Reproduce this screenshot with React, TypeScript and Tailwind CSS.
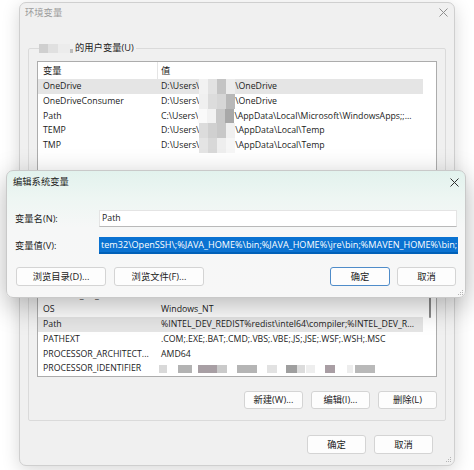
import clsx from "clsx";

const userRows = [
  { name: "OneDrive", pre: "D:\\Users\\", post: "\\OneDrive", sel: true, blur: ["#f2f2f2", "#e2e2e2", "#c4c4c4", "#ececec"] },
  { name: "OneDriveConsumer", pre: "D:\\Users\\", post: "\\OneDrive", blur: ["#f0f0f0", "#dcdcdc", "#d6d6d6", "#b8b8b8"] },
  { name: "Path", pre: "C:\\Users\\", post: "\\AppData\\Local\\Microsoft\\WindowsApps;;...", blur: ["#fafafa", "#f2f2f2", "#c8c8c8", "#a8a8a8"] },
  { name: "TEMP", pre: "D:\\Users\\", post: "\\AppData\\Local\\Temp", blur: ["#dcdcdc", "#d0d0d0", "#c8c8c8", "#f0f0f0"] },
  { name: "TMP", pre: "D:\\Users\\", post: "\\AppData\\Local\\Temp", blur: ["#e4e4e4", "#d8d8d8", "#eeeeee", "#f6f6f6"] },
];

const sysRows = [
  { name: "ComSpec", value: "C:\\Windows\\system32\\cmd.exe" },
  { name: "DriverData", value: "C:\\Windows\\System32\\Drivers\\DriverData" },
  { name: "NUMBER_OF_PROCESSORS", value: "16" },
  { name: "OS", value: "Windows_NT" },
  { name: "Path", value: "%INTEL_DEV_REDIST%redist\\intel64\\compiler;%INTEL_DEV_R...", sel: true },
  { name: "PATHEXT", value: ".COM;.EXE;.BAT;.CMD;.VBS;.VBE;.JS;.JSE;.WSF;.WSH;.MSC" },
  { name: "PROCESSOR_ARCHITECT...", value: "AMD64" },
];

// pixelated blocks over the processor id, [from, to, colour] in page x
const idBlocks: [number, number, string][] = [
  [159, 167, "#d9d9d9"],
  [178, 192, "#b3b3b3"],
  [198, 217, "#a89fa4"],
  [217, 227, "#cacaca"],
  [237, 257, "#b5b5b5"],
  [267, 277, "#e2e2e2"],
  [286, 297, "#9f9f9f"],
  [297, 305, "#dcdcdc"],
  [306, 315, "#eeeeee"],
  [325, 335, "#a99ea4"],
  [347, 353, "#ededed"],
  [355, 375, "#b9b9b9"],
];

function CloseIcon({ color }: { color: string }) {
  return (
    <svg width="9" height="9" viewBox="0 0 9 9" fill="none" stroke={color} strokeWidth="1">
      <path d="M0.5 0.5L8.5 8.5M8.5 0.5L0.5 8.5" />
    </svg>
  );
}

function Grip() {
  return (
    <svg width="6" height="6" viewBox="0 0 6 6" fill="#b5b5b5">
      <rect x="4" y="0" width="1" height="1" />
      <rect x="2" y="2" width="1" height="1" />
      <rect x="4" y="2" width="1" height="1" />
      <rect x="0" y="4" width="1" height="1" />
      <rect x="2" y="4" width="1" height="1" />
      <rect x="4" y="4" width="1" height="1" />
    </svg>
  );
}

function Button({ label, w, h = "h-[18px]", primary }: { label: string; w: string; h?: string; primary?: boolean }) {
  return (
    <div
      className={clsx(
        "flex shrink-0 items-center justify-center rounded-[3px] border bg-[#fdfdfd] text-[#1b1b1b]",
        w,
        h,
        primary ? "border-[#4f8cc9]" : "border-[#d4d4d4]"
      )}
    >
      {label}
    </div>
  );
}

function Header() {
  return (
    <div className="flex h-[17px] items-center bg-white">
      <div className="w-[119px] shrink-0 pl-[5px]">变量</div>
      <div className="h-full w-px bg-[#e5e5e5]" />
      <div className="pl-[3px]">值</div>
    </div>
  );
}

function Row({ name, sel, children }: { name: string; sel?: boolean; children: React.ReactNode }) {
  return (
    <div className={clsx("flex h-[14.75px] items-center text-[8.75px]", sel && "bg-[#e5e5e5]")}>
      <div className="flex h-full w-[120px] shrink-0 items-center overflow-hidden whitespace-nowrap pl-[5px]">{name}</div>
      <div className="flex h-full min-w-0 flex-1 items-center overflow-hidden whitespace-nowrap pl-[3px]">{children}</div>
    </div>
  );
}

export default function App() {
  return (
    <div className="relative h-[470px] w-[474px] overflow-hidden bg-white font-['Open_Sans','Noto_Sans_CJK_SC',sans-serif] text-[9.3px] leading-none text-[#1b1b1b]">
      {/* 环境变量 window (inactive) */}
      <div className="absolute left-[19px] top-[2px] flex h-[464px] w-[436px] flex-col rounded-[7px] border border-[#cfcfcf] bg-[#f0f0f0] shadow-[0_4px_18px_rgba(0,0,0,0.16)]">
        <div className="flex h-[19px] items-center justify-between pl-[5px] pr-[6px] text-[#9b9b9b]">
          <span>环境变量</span>
          <CloseIcon color="#8f8f8f" />
        </div>

        <fieldset className="mx-[8px] mt-[19px] min-w-0 rounded-[2px] border border-[#dadada] px-[8px] pb-[10px]">
          <legend className="ml-[2px] flex h-[14px] items-center pr-[2px]">
            <span className="mr-[2px] flex h-[9px] items-end">
              <span className="h-[9px] w-[9px] bg-[#cfcfcf]" />
              <span className="h-[9px] w-[10px] bg-[#e0e0e0]" />
              <span className="h-[9px] w-[12px] bg-[#ececec]" />
              <span className="h-[4px] w-[3px] bg-[#bdbdbd]" />
            </span>
            的用户变量(U)
          </legend>
          <div className="mt-[6px] flex h-[115px] overflow-hidden border border-[#acacac] bg-white">
            <div className="min-w-0 flex-1">
              <Header />
              {userRows.map((r) => (
                <Row key={r.name} name={r.name} sel={r.sel}>
                  <span>{r.pre}</span>
                  <span className="flex h-full shrink-0">
                    {r.blur.map((c, i) => (
                      <span key={i} className="h-full w-[9px]" style={{ background: c }} />
                    ))}
                  </span>
                  <span>{r.post}</span>
                </Row>
              ))}
            </div>
            <div className="w-[13px] shrink-0" />
          </div>
          <div className="mt-[10px] flex justify-end gap-[8px]">
            <Button label="新建(N)..." w="w-[59px]" />
            <Button label="编辑(E)..." w="w-[59px]" />
            <Button label="删除(D)" w="w-[59px]" />
          </div>
        </fieldset>

        <fieldset className="mx-[8px] mt-[5px] min-w-0 rounded-[2px] border border-[#dadada] px-[8px] pb-[11px]">
          <legend className="ml-[2px] flex h-[14px] items-center px-[2px]">系统变量(S)</legend>
          <div className="mt-[6px] flex h-[137px] overflow-hidden border border-[#acacac] bg-white">
            <div className="min-w-0 flex-1">
              <Header />
              {sysRows.map((r) => (
                <Row key={r.name} name={r.name} sel={r.sel}>
                  {r.value}
                </Row>
              ))}
              <Row name="PROCESSOR_IDENTIFIER">
                <span className="flex h-[8px]">
                  {idBlocks.map(([a, b, c], i) => (
                    <span
                      key={i}
                      className="h-full shrink-0"
                      style={{ marginLeft: a - (i ? idBlocks[i - 1][1] : 161), width: b - a, background: c }}
                    />
                  ))}
                </span>
              </Row>
            </div>
            <div className="flex w-[13px] shrink-0 justify-center">
              <div className="mt-[44px] h-[33px] w-[2px] rounded-full bg-[#8a8a8a]" />
            </div>
          </div>
          <div className="mt-[14px] flex justify-end gap-[8px]">
            <Button label="新建(W)..." w="w-[59px]" />
            <Button label="编辑(I)..." w="w-[59px]" />
            <Button label="删除(L)" w="w-[59px]" />
          </div>
        </fieldset>

        <div className="mt-[14px] flex justify-end gap-[8px] pr-[21px]">
          <Button label="确定" w="w-[59px]" h="h-[19px]" />
          <Button label="取消" w="w-[59px]" h="h-[19px]" />
        </div>
        <div className="mt-auto flex justify-end pb-[2px] pr-[2px]">
          <Grip />
        </div>
      </div>

      {/* 编辑系统变量 dialog (active, on top) */}
      <div className="absolute left-[6px] top-[170px] flex w-[460px] flex-col rounded-[7px] border border-[#c9c9c9] bg-[linear-gradient(180deg,#e2f2ed_0%,#eef6f3_22%,#f6f7f7_45%,#f7f7f7_100%)] shadow-[0_8px_28px_rgba(0,0,0,0.28)]">
        <div className="flex h-[22px] items-center justify-between pl-[6px] pr-[6px]">
          <span>编辑系统变量</span>
          <CloseIcon color="#303030" />
        </div>

        <div className="mt-[17px] flex items-center pl-[8px] pr-[8px]">
          <div className="w-[84px] shrink-0">变量名(N):</div>
          <div className="flex h-[17px] flex-1 items-center border border-[#e4e4e4] border-b-[#b9b9b9] bg-white pl-[2px] text-[8.75px]">
            Path
          </div>
        </div>

        <div className="mt-[10px] flex items-center pl-[8px] pr-[7px]">
          <div className="w-[84px] shrink-0">变量值(V):</div>
          <div className="flex h-[17px] min-w-0 flex-1 border-b-2 border-b-[#0060b8] bg-white">
            <div className="flex min-w-0 flex-1 items-center overflow-hidden whitespace-nowrap bg-[#0a72d1] pl-[2px] text-[9.1px] text-white">
              tem32\OpenSSH\;%JAVA_HOME%\bin;%JAVA_HOME%\jre\bin;%MAVEN_HOME%\bin;
            </div>
          </div>
        </div>

        <div className="mt-[13px] flex items-center pl-[9px] pr-[9px]">
          <Button label="浏览目录(D)..." w="w-[90px]" h="h-[19px]" />
          <div className="ml-[8px]">
            <Button label="浏览文件(F)..." w="w-[90px]" h="h-[19px]" />
          </div>
          <div className="flex-1" />
          <Button label="确定" w="w-[60px]" h="h-[19px]" primary />
          <div className="ml-[7px]">
            <Button label="取消" w="w-[59px]" h="h-[19px]" />
          </div>
        </div>
        <div className="flex h-[11px] items-end justify-end pb-[1px] pr-[1px]">
          <Grip />
        </div>
      </div>
    </div>
  );
}
